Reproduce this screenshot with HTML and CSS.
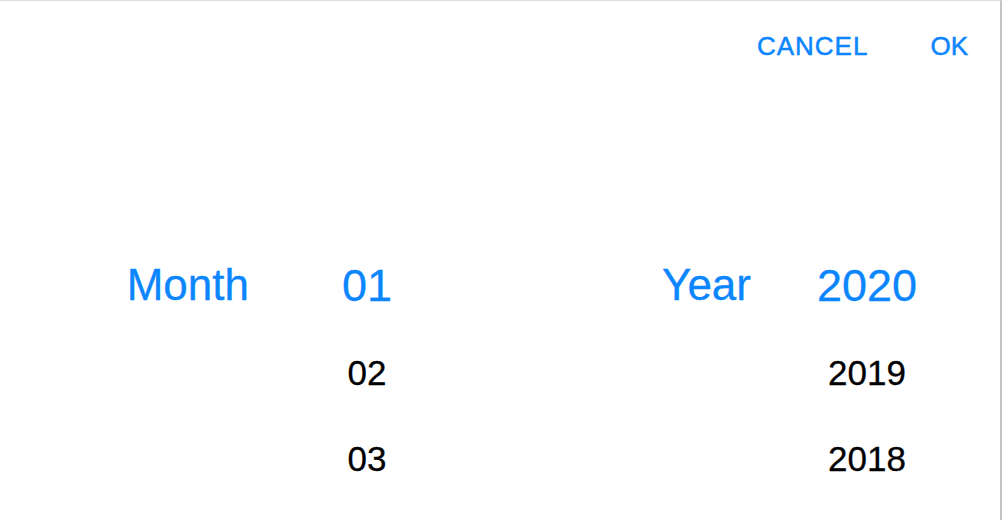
FILE: index.html
```html
<!DOCTYPE html>
<html>
<head>
<meta charset="utf-8">
<link rel="stylesheet" href="styles.css">
</head>
<body>
<div class="page">
  <div class="header">
    <span class="btn btn-cancel">CANCEL</span>
    <span class="btn btn-ok">OK</span>
  </div>
  <div class="picker">
    <div class="half">
      <div class="label">Month</div>
      <div class="wheel">
        <div class="item selected">01</div>
        <div class="item">02</div>
        <div class="item">03</div>
      </div>
    </div>
    <div class="half">
      <div class="label">Year</div>
      <div class="wheel">
        <div class="item selected">2020</div>
        <div class="item">2019</div>
        <div class="item">2018</div>
      </div>
    </div>
  </div>
</div>
</body>
</html>
```
FILE: styles.css
```css
html, body {
  margin: 0;
  padding: 0;
  background: #fff;
}
body {
  font-family: "Liberation Sans", Arial, Helvetica, sans-serif;
}
.page {
  box-sizing: border-box;
  width: 1002px;
  height: 520px;
  border-top: 1px solid #dddddd;
  border-right: 2px solid #c4c4c4;
  background: #fff;
  overflow: hidden;
  display: flex;
  flex-direction: column;
}
.header {
  box-sizing: border-box;
  height: 239px;
  padding-top: 30px;
  padding-right: 32px;
  display: flex;
  justify-content: flex-end;
  align-items: flex-start;
  gap: 62px;
}
.btn {
  color: #0b86fe;
  font-size: 26px;
  line-height: 30px;
  -webkit-text-stroke: 0.5px #0b86fe;
}
.btn-cancel {
  letter-spacing: 1px;
}
.picker {
  display: grid;
  grid-template-columns: 502px 498px;
}
.half {
  display: grid;
  grid-template-columns: 249px 1fr;
}
.label {
  color: #0b86fe;
  font-size: 44px;
  line-height: 90px;
  height: 90px;
  text-align: right;
  -webkit-text-stroke: 0.3px #0b86fe;
}
.wheel {
  display: flex;
  flex-direction: column;
  align-items: center;
  padding-right: 17px;
}
.item {
  color: #000;
  font-size: 35px;
  line-height: 86px;
  -webkit-text-stroke: 0.3px #000;
}
.item.selected {
  color: #0b86fe;
  font-size: 45px;
  line-height: 90px;
  position: relative;
  top: 1px;
  -webkit-text-stroke: 0.3px #0b86fe;
}
```
